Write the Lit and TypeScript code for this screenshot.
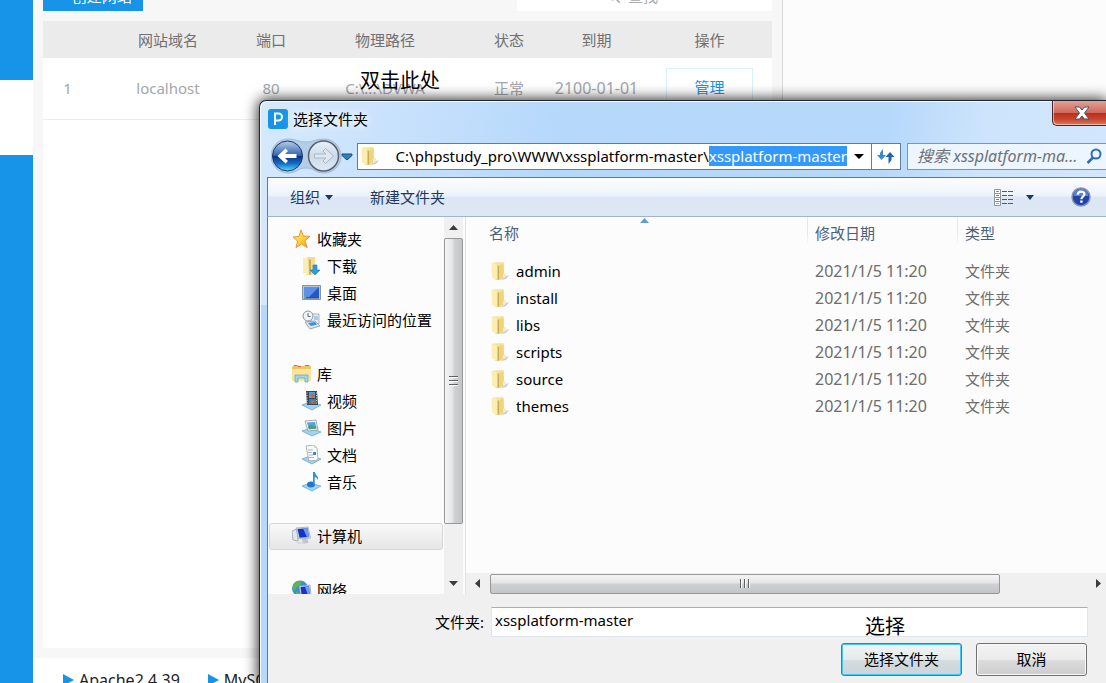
import { LitElement, html, css, svg } from "lit";
import { customElement, property, query } from "lit/decorators.js";
import { classMap } from "lit/directives/class-map.js";

const ICONS: Record<string, unknown> = {
  star: svg`<path d="M9 1l2.400 6 6.600.400-5 4.300 2.200 7L9.600 15l-5.600 3.600 1.600-6.600L1 8l6-.600z" fill="url(#g-star)" stroke="#e8963a" stroke-width="1"/>
    <defs><linearGradient id="g-star" x1="0" y1="0" x2="1" y2="1"><stop offset="0" stop-color="#fff0a0"/><stop offset=".5" stop-color="#ffd23c"/><stop offset="1" stop-color="#f29a1e"/></linearGradient></defs>`,
  download: svg`<path d="M5 1h8v16l-3 2H4z" fill="#f3dc8c"/><path d="M1 1.500l6 1.500v16l-6-2z" fill="#fbeeb4"/><path d="M6.500 3L9 4v14l-2 1z" fill="#cfae55"/>
    <path d="M11 9h4v5h3l-5 5-5-5h3z" fill="#2f9be4" stroke="#1c78b8" stroke-width=".6"/>`,
  desktop: svg`<path d="M.5 2.500h18v14H.5z" fill="#b9c6d2" stroke="#8394a6"/><path d="M2 4h15v10H2z" fill="#2458c9"/><path d="M2 4h15L7 14H2z" fill="#5c90ea"/><path d="M2 14h15v1.500H2z" fill="#39546f"/><path d="M2 13.500h2v2H2z" fill="#4fc36b"/>`,
  recent: svg`<path d="M9 4h8v10H9z" fill="#e9edf2" stroke="#98a3ae" stroke-width=".8"/><path d="M3 12l10-1 5 5-10 3z" fill="#dde5ec" stroke="#8c98a5" stroke-width=".8"/><path d="M6 13l7-1 2 2.500-6 1.500z" fill="#3d8fd8"/><circle cx="6" cy="6" r="5" fill="#f0f3f7" stroke="#8995a3"/><path d="M6 3v3.500H8.500" fill="none" stroke="#5a6b7d"/><path d="M12 7h4M12 9h4" stroke="#6aa7d8"/>`,
  library: svg`<path d="M0 3l3-2h3l1 1h5l1-1h5l1 2v14H0z" fill="#e9c765"/><path d="M0 5h19v12H0z" fill="#f8e59a"/><path d="M2 1h3v1H2z" fill="#4caf50"/><path d="M6 2h3v1H6z" fill="#e85b4a"/><path d="M13 1h4v1h-4z" fill="#4b9ddb"/><path d="M3 11h13v7h-3v-4H6v4H3z" fill="#9fd6f2" stroke="#5fa8d0" stroke-width=".8"/>`,
  video: svg`<path d="M0 14l8-3 11 3-9 5z" fill="#9fd3ef" stroke="#5fa3cb" stroke-width=".7"/><path d="M4 0h11l1 14H5z" fill="#3e4650"/><path d="M7 1h6v6H7z" fill="#4ca3e0"/><path d="M7 8h7v5H7z" fill="#2a7fc8"/><path d="M8 4l3-2 2 3-2 2zM9 10l3-1 1 3-3 1z" fill="#c9683a"/><path d="M5 1.500v12M14.500 1.500v12" stroke="#cfd6dc" stroke-dasharray="1 1.500"/>`,
  picture: svg`<path d="M0 13l8-3 11 4-9 4z" fill="#9fd3ef" stroke="#5fa3cb" stroke-width=".7"/><path d="M3 3l11-1 2 10-10 1z" fill="#f3f6f8" stroke="#8f9ba6" stroke-width=".8"/><path d="M5 4.500l8-.5 1.500 6.500-7.500.8z" fill="#4da5e2"/><path d="M6 9l3-2 2 1.500 3-.5.5 2.500-7.500.8z" fill="#5a9a6c"/>`,
  document: svg`<path d="M0 14l8-3 11 3-9 5z" fill="#9fd3ef" stroke="#5fa3cb" stroke-width=".7"/><path d="M4 1l8-1 3 3 1 12-9 1z" fill="#fafbfc" stroke="#9aa3ad" stroke-width=".8"/><path d="M12 0v3h3z" fill="#cdd4da"/><path d="M6 5h5M6 7.500h4M7 10h4M7 12.500h5" stroke="#a9b4c4"/><path d="M11 7h3v3h-3z" fill="#3a84cc"/>`,
  music: svg`<path d="M0 14l8-3 11 3-9 5z" fill="#9fd3ef" stroke="#5fa3cb" stroke-width=".7"/><ellipse cx="9" cy="12.500" rx="4" ry="3" fill="#1f78c8"/><path d="M11 0h2c0 3 4 4 3 8-1-2-2-3-3.300-3v8H11z" fill="#2f8fdc"/>`,
  computer: svg`<path d="M0 5l5-2 1 12-5-1z" fill="#e2e6ea" stroke="#9199a2" stroke-width=".7"/><path d="M4 2l12-1 2.500 11-12 1z" fill="#d5dbe2" stroke="#9aa5b1" stroke-width=".7"/><path d="M5.500 3l10-.7L17 11l-9.500.8z" fill="#1735c4"/><path d="M11 2.600l4.500-.3L17 11l-2 .2z" fill="#6c9df2"/><path d="M10 13l5-.5 2 4-6 1.500z" fill="#c0c6cd"/><path d="M3 15l8 1 1 2-6 0z" fill="#d9dde2"/>`,
  network: svg`<circle cx="8" cy="8.500" r="8" fill="#3f8fd0"/><path d="M2 4c4-4 6-3 8-2l-2 3-3 2-3 4c-2-2-1-5 0-7zM4 12l4 1 1 3c-3 0-5-2-5-4z" fill="#58b84c"/><path d="M7 6l11-1 1 10-10 2z" fill="#d7dee6" stroke="#8b97a4" stroke-width=".7"/><path d="M8.500 7l8.500-.7.7 7.700-8 1.500z" fill="#1735c4"/><path d="M13 6.700l4-.4.7 7.700-2 .4z" fill="#6c9df2"/>`,
  folder: svg`<path d="M13 16l6-2-3 4-5 1z" fill="#c9cbce"/><path d="M3 1.500L13.500 1l.5 15-4 3H5z" fill="#f6e39b"/><path d="M8.500 5l5-3 .5 14-5 3z" fill="#efd578"/><path d="M6.500 3.500L9 5v13.500L6.500 19z" fill="#c9ab5c"/><path d="M1.500 1.500l6 2v15.500L2 16.500z" fill="#fbeeb0"/><path d="M13 13l3-1.500v4.500l-3 1.500z" fill="#f3ead0"/>`,
};

const icon = (name: string) =>
  html`<svg class="icon" width="20" height="20" viewBox="0 0 20 20" aria-hidden="true">${ICONS[name]}</svg>`;

interface TreeItem {
  icon: string;
  label: string;
  child?: boolean;
  selected?: boolean;
}

const TREE: TreeItem[][] = [
  [
    { icon: "star", label: "收藏夹" },
    { icon: "download", label: "下载", child: true },
    { icon: "desktop", label: "桌面", child: true },
    { icon: "recent", label: "最近访问的位置", child: true },
  ],
  [
    { icon: "library", label: "库" },
    { icon: "video", label: "视频", child: true },
    { icon: "picture", label: "图片", child: true },
    { icon: "document", label: "文档", child: true },
    { icon: "music", label: "音乐", child: true },
  ],
  [{ icon: "computer", label: "计算机", selected: true }],
  [{ icon: "network", label: "网络" }],
];

const FOLDERS = ["admin", "install", "libs", "scripts", "source", "themes"];

const base = css`
  * {
    box-sizing: border-box;
  }
  button,
  input {
    font: inherit;
    color: inherit;
    margin: 0;
    padding: 0;
    border: 0;
    border-radius: 0;
    background: none;
    outline: none;
  }
  table {
    border-collapse: collapse;
    table-layout: fixed;
    width: 100%;
  }
  th,
  td {
    padding: 0;
    font-weight: 400;
  }
  svg {
    display: block;
    flex: none;
  }
`;

@customElement("folder-dialog")
export class FolderDialog extends LitElement {
  @property() path = "C:\\phpstudy_pro\\WWW\\xssplatform-master\\";
  @property() folder = "xssplatform-master";
  @query(".path") pathInput!: HTMLInputElement;

  static styles = [
    base,
    css`
      :host {
        display: flex;
        flex-direction: column;
        overflow: hidden;
        padding: 0 0 0 7px;
        border: 1px solid #20262e;
        border-width: 1px 0 0 1px;
        border-radius: 7px 0 0 0;
        color: #000;
        background:
          linear-gradient(100deg, #d6e9fd 0, #c6e0fc 160px, #b5d8fb 300px, #b5d8fb 620px, #cde4fc 720px, #d3e7fd 100%) 0 0 / 100% 204px no-repeat,
          #b5d8fb;
        box-shadow: 0 0 14px 1px rgba(0, 0, 0, 0.85), inset 1px 1px 0 #f2f9ff;
      }
      .title {
        display: flex;
        height: 36px;
        padding-left: 1px;
        gap: 5px;
        align-items: center;
      }
      .title h1 {
        flex: 1;
        margin: 0;
        font-size: 15px;
        font-weight: 400;
        line-height: 20px;
        text-shadow: 0 0 8px #fff, 0 0 12px #fff;
      }
      .close {
        align-self: flex-start;
        width: 54px;
        height: 25px;
        padding-left: 21px;
        border: 1px solid #4c2326;
        border-width: 0 0 1px 1px;
        border-radius: 0 0 0 5px;
        background: linear-gradient(#e3a097 0, #d06a5c 48%, #b8301d 50%, #c8432c 75%, #d87a58 100%);
        box-shadow: inset 1px -1px 0 rgba(255, 255, 255, 0.5);
      }
      .nav {
        display: flex;
        height: 40px;
        align-items: center;
        padding: 0 0 2px 4px;
      }
      .travel {
        display: flex;
        align-items: center;
        width: 86px;
      }
      .address {
        display: flex;
        flex: 1;
        min-width: 0;
        height: 27px;
        align-items: center;
        border: 1px solid #5d7f9f;
        background: #fff;
      }
      .address > svg {
        margin: 0 4px 0 2px;
      }
      .path {
        flex: 1;
        min-width: 0;
        height: 21px;
        text-align: right;
      }
      .path::selection {
        background: #3399ff;
        color: #fff;
      }
      .drop {
        width: 24px;
        height: 25px;
        display: grid;
        place-items: center;
      }
      .refresh {
        width: 29px;
        height: 25px;
        display: grid;
        place-items: center;
        border-left: 1px solid #5d7f9f;
      }
      .search {
        display: flex;
        width: 199px;
        height: 27px;
        margin-left: 6px;
        padding-left: 9px;
        align-items: center;
        border: 1px solid #7b95b3;
        border-right: 0;
        background: #edf5fe;
      }
      .search input {
        width: 169px;
        font-size: 16px;
        font-style: italic;
        text-overflow: ellipsis;
      }
      .search input::placeholder {
        color: #6d7178;
        opacity: 1;
      }
      .tools {
        display: flex;
        height: 40px;
        padding: 0 15px 0 22px;
        align-items: center;
        border: 1px solid #5f7a94;
        border-width: 1px 0 1px 1px;
        border-bottom-color: #a0b4cb;
        color: #1e395b;
        background: linear-gradient(#fbfdff 0, #eef4fb 45%, #dce6f4 52%, #dde8f5 100%);
      }
      .tools button {
        display: flex;
        align-items: center;
        gap: 5px;
        line-height: 20px;
      }
      .tools button + button {
        margin-left: 37px;
      }
      .tools .view {
        margin-left: auto;
        gap: 12px;
      }
      .body {
        display: flex;
        flex: 1;
        min-height: 0;
        border-left: 1px solid #5f7a94;
        background: #fcfcfc;
      }
      .tree {
        width: 176px;
        padding: 9px 1px 0;
        overflow: hidden;
      }
      .tree ul {
        margin: 0 0 27px;
        padding: 0;
        list-style: none;
      }
      .tree li {
        display: flex;
        height: 27px;
        padding: 0 0 2px 22px;
        gap: 5px;
        align-items: center;
        line-height: 20px;
        border: 1px solid transparent;
        border-radius: 3px;
      }
      .tree li.child {
        padding-left: 32px;
      }
      .tree li.selected {
        border-color: #d6d6d6;
        background: linear-gradient(#f9f9f9, #e6e6e6);
      }
      .vbar {
        display: flex;
        flex-direction: column;
        width: 19px;
        align-items: center;
        background: #f0f0f0;
      }
      .arrow {
        display: grid;
        width: 19px;
        height: 21px;
        flex: none;
        place-items: center;
      }
      .vthumb {
        display: grid;
        width: 19px;
        flex: 286;
        place-items: center;
        border: 1px solid #979797;
        border-radius: 2px;
        background: linear-gradient(90deg, #f5f5f5, #e4e4e6 45%, #cfd0d2 55%, #c4c5c8);
      }
      .vrest {
        flex: 49;
      }
      .list {
        display: flex;
        flex: 1;
        min-width: 0;
        flex-direction: column;
        margin-left: 2px;
        border-left: 1px solid #d6e5f5;
      }
      .files {
        position: relative;
        flex: 1;
      }
      .sort {
        position: absolute;
        top: 1px;
        left: 174px;
      }
      .files th {
        height: 40px;
        padding: 0 0 9px 8px;
        text-align: left;
        line-height: 20px;
        color: #4c607a;
        background: linear-gradient(#dfeaf6, #dfeaf6 50%, #fcfcfc) 0 0 / 1px 30px no-repeat;
      }
      .files th:first-child {
        padding-left: 23px;
        background: none;
      }
      .files td {
        height: 27px;
        padding-left: 8px;
        line-height: 20px;
        color: #6d6d6d;
      }
      .files td:first-child {
        padding-left: 24px;
        color: #000;
      }
      .files .date {
        font-size: 16px;
      }
      .name {
        display: flex;
        gap: 6px;
        align-items: center;
      }
      .c-name {
        width: 341px;
      }
      .c-date {
        width: 150px;
      }
      .hbar {
        display: flex;
        height: 21px;
        padding-left: 2px;
        align-items: center;
        background: #f0f0f0;
      }
      .hthumb {
        display: grid;
        flex: 510;
        height: 20px;
        place-items: center;
        border: 1px solid #979797;
        border-radius: 2px;
        background: linear-gradient(#f5f5f5, #e4e4e6 45%, #cfd0d2 50%, #c4c5c8);
      }
      .hrest {
        flex: 90;
      }
      .hbar .arrow {
        width: 22px;
        padding-right: 4px;
      }
      .hbar .arrow:last-child {
        width: 16px;
        padding-right: 0;
      }
      .foot {
        padding: 13px 18px 7px 0;
        border-left: 1px solid #5f7a94;
        background: #f0f0f0;
      }
      .field {
        display: flex;
        align-items: center;
      }
      .field label {
        width: 223px;
        padding-right: 7px;
        text-align: right;
        line-height: 20px;
      }
      .field input {
        flex: 1;
        min-width: 0;
        height: 30px;
        padding: 0 3px 5px;
        border: 1px solid #e0e5ee;
        border-top-color: #abadb3;
        background: #fff;
      }
      .actions {
        display: flex;
        justify-content: flex-end;
        gap: 14px;
        padding: 6px 1px 0 0;
      }
      .actions button {
        width: 111px;
        height: 33px;
        padding-bottom: 2px;
        border: 1px solid #707070;
        border-radius: 3px;
        background: linear-gradient(#f3f3f3, #ebebeb 50%, #dcdcdc 51%, #cdcdcd);
        box-shadow: inset 0 0 0 1px #fafafa;
      }
      .actions .primary {
        width: 121px;
        border-color: #3c7fb1;
        background: linear-gradient(#f1f4f5, #e4eaec 50%, #d4dde0 51%, #cad5d9);
        box-shadow: inset 0 0 0 1px #3fc9f4;
      }
    `,
  ];

  firstUpdated() {
    const input = this.pathInput;
    input.focus({ preventScroll: true });
    input.setSelectionRange(this.path.length, input.value.length);
    input.scrollLeft = input.scrollWidth;
  }

  render() {
    const down = html`<svg width="10" height="5" viewBox="0 0 10 5"><path d="M0 0h10L5 5z" fill="currentColor" /></svg>`;
    return html`
      <header class="title">
        <svg width="20" height="20" viewBox="0 0 20 20" aria-hidden="true">
          <rect width="20" height="20" rx="3" fill="#1794e8" />
          <path d="M7 16V4.500h3.500a3.500 3.500 0 0 1 0 7H7" fill="none" stroke="#fff" stroke-width="2" />
        </svg>
        <h1>选择文件夹</h1>
        <button class="close" aria-label="关闭">
          <svg width="16" height="14" viewBox="0 0 16 14">
            <path d="M1 1h4.500L8 4l2.500-3H15l-4.500 6 4.500 6h-4.500L8 10l-2.500 3H1l4.500-6z" fill="#fff" stroke="#4f5364" stroke-width="1" />
          </svg>
        </button>
      </header>
      <div class="nav">
        <div class="travel">
          <svg width="84" height="36" viewBox="0 0 84 36" aria-hidden="true">
            <defs>
              <linearGradient id="blue" x1="0" y1="0" x2="0" y2="1">
                <stop offset="0" stop-color="#b5cdea" />
                <stop offset=".48" stop-color="#3664ae" />
                <stop offset=".5" stop-color="#0b2f86" />
                <stop offset=".75" stop-color="#136cc4" />
                <stop offset="1" stop-color="#4fe0fb" />
              </linearGradient>
              <linearGradient id="pale" x1="0" y1="0" x2="0" y2="1">
                <stop offset="0" stop-color="#e9f1f9" />
                <stop offset=".5" stop-color="#ccdae9" />
                <stop offset="1" stop-color="#dfeaf6" />
              </linearGradient>
            </defs>
            <path d="M17 1c9 0 10 3 18 3s9-3 18-3a17 17 0 0 1 0 34c-9 0-10-5-18-5s-9 5-18 5a17 17 0 0 1 0-34z" fill="#a9c2df" stroke="#8fa9c6" opacity=".7" />
            <circle cx="16.500" cy="18" r="15" fill="url(#blue)" stroke="#1a3568" />
            <path d="M6.500 18l8-7.500 2.500 2.500-3 3h11.500v4H14l3 3-2.500 2.500z" fill="#fff" />
            <circle cx="52.500" cy="18" r="15" fill="url(#pale)" stroke="#59626d" stroke-width="1.500" />
            <path d="M62.500 18l-8-7.500-2.500 2.500 3 3H43.500v4H55l-3 3 2.500 2.500z" fill="#dfe7ef" stroke="#aab6c3" />
            <path d="M71 16h10v1.500L76 22l-5-4.500z" fill="#2f83bd" stroke="#1c4873" />
          </svg>
        </div>
        <div class="address">
          ${icon("folder")}
          <input class="path" aria-label="地址" spellcheck="false" .value=${this.path + this.folder} />
          <button class="drop" aria-label="以前的位置">${down}</button>
          <button class="refresh" aria-label="刷新">
            <svg width="18" height="17" viewBox="0 0 18 17">
              <path d="M6 1L3 5v2H0l4.500 5L9 7H6V5z" fill="#3a8ace" />
              <path d="M13 4l4.500 5h-3v3l-3 4v-7H8.500z" fill="#2563ab" />
            </svg>
          </button>
        </div>
        <label class="search">
          <input type="text" aria-label="搜索" placeholder="搜索 xssplatform-ma..." />
          <svg width="16" height="16" viewBox="0 0 16 16">
            <circle cx="10" cy="6" r="4.500" fill="none" stroke="#2f6db3" stroke-width="2" />
            <path d="M7 9.500L1.500 15" stroke="#2f6db3" stroke-width="2.500" />
          </svg>
        </label>
      </div>
      <div class="tools">
        <button>组织 <svg width="8" height="5" viewBox="0 0 8 5"><path d="M0 0h8L4 5z" fill="currentColor" /></svg></button>
        <button>新建文件夹</button>
        <button class="view" aria-label="更改视图">
          <svg width="20" height="17" viewBox="0 0 20 17">
            <path d="M.5.500h6v16h-6z" fill="#fff" stroke="#8d959e" />
            <path d="M1 4.500h5M1 8.500h5M1 12.500h5" stroke="#8d959e" />
            <path d="M2 2.500h3" stroke="#69a05c" /><path d="M2 6.500h3" stroke="#e04a3d" /><path d="M2 10.500h3" stroke="#4a86d0" /><path d="M2 14.500h3" stroke="#a0c050" />
            <path d="M8 2.500h11M8 6.500h11M8 10.500h11M8 14.500h11" stroke="#4c5d70" stroke-dasharray="5 1" />
          </svg>
          <svg width="8" height="5" viewBox="0 0 8 5"><path d="M0 0h8L4 5z" fill="currentColor" /></svg>
        </button>
        <button aria-label="帮助">
          <svg width="20" height="20" viewBox="0 0 20 20">
            <circle cx="10" cy="10" r="9" fill="#1f45ad" stroke="#8b96ab" stroke-width="1.500" />
            <path d="M2.500 9a7.500 7.500 0 0 1 15 0z" fill="#5b82d8" />
            <path d="M6.800 7.800c0-4.300 6.600-4.100 6.600-.6 0 2.300-3 2.300-3 5" fill="none" stroke="#fff" stroke-width="2.200" />
            <path d="M9.200 13.500h2.400v2.300H9.200z" fill="#fff" />
          </svg>
        </button>
      </div>
      <div class="body">
        <nav class="tree">
          ${TREE.map(
            (group) => html`<ul>
              ${group.map(
                (item) => html`<li class=${classMap({ child: !!item.child, selected: !!item.selected })}>
                  ${icon(item.icon)}<span>${item.label}</span>
                </li>`
              )}
            </ul>`
          )}
        </nav>
        <div class="vbar">
          <div class="arrow"><svg width="9" height="5" viewBox="0 0 9 5"><path d="M0 5h9L4.500 0z" fill="#3c3c3c" /></svg></div>
          <div class="vthumb"><svg width="9" height="10" viewBox="0 0 9 10"><path d="M0 .5h9M0 4.500h9M0 8.500h9" stroke="#5c5f63" /><path d="M0 1.500h9M0 5.500h9M0 9.500h9" stroke="#fff" /></svg></div>
          <div class="vrest"></div>
          <div class="arrow"><svg width="9" height="5" viewBox="0 0 9 5"><path d="M0 0h9L4.500 5z" fill="#3c3c3c" /></svg></div>
        </div>
        <div class="list">
          <div class="files">
            <svg class="sort" width="9" height="5" viewBox="0 0 9 5"><path d="M0 5h9L4.500 0z" fill="#5ba3cc" /></svg>
            <table>
              <colgroup><col class="c-name" /><col class="c-date" /><col /></colgroup>
              <thead>
                <tr><th>名称</th><th>修改日期</th><th>类型</th></tr>
              </thead>
              <tbody>
                ${FOLDERS.map(
                  (name) => html`<tr>
                    <td><div class="name">${icon("folder")}<span>${name}</span></div></td>
                    <td class="date">2021/1/5 11:20</td>
                    <td>文件夹</td>
                  </tr>`
                )}
              </tbody>
            </table>
          </div>
          <div class="hbar">
            <div class="arrow"><svg width="5" height="9" viewBox="0 0 5 9"><path d="M5 0v9L0 4.500z" fill="#3c3c3c" /></svg></div>
            <div class="hthumb"><svg width="10" height="9" viewBox="0 0 10 9"><path d="M.5 0v9M4.500 0v9M8.500 0v9" stroke="#5c5f63" /><path d="M1.500 0v9M5.500 0v9M9.500 0v9" stroke="#fff" /></svg></div>
            <div class="hrest"></div>
            <div class="arrow"><svg width="5" height="9" viewBox="0 0 5 9"><path d="M0 0v9l5-4.500z" fill="#3c3c3c" /></svg></div>
          </div>
        </div>
      </div>
      <footer class="foot">
        <div class="field">
          <label for="folder">文件夹:</label>
          <input id="folder" spellcheck="false" .value=${this.folder} />
        </div>
        <div class="actions">
          <button class="primary">选择文件夹</button>
          <button>取消</button>
        </div>
      </footer>
    `;
  }
}

@customElement("app-root")
export class AppRoot extends LitElement {
  static styles = [
    base,
    css`
      :host {
        position: relative;
        display: grid;
        grid-template-columns: 33px minmax(0, 750px) 1fr;
        height: 100vh;
        overflow: hidden;
        font: 15px/20px "Noto Sans", "Noto Sans CJK SC", sans-serif;
        background: #fcfcfc;
      }
      .side {
        display: flex;
        flex-direction: column;
        background: #1794e8;
      }
      .side .active {
        height: 75px;
        margin-top: 80px;
        background: #fff;
      }
      .site {
        display: flex;
        flex-direction: column;
        min-height: 0;
        border-right: 1px solid #d8d8d8;
        background: #f7f7f7;
      }
      .bar {
        display: flex;
        height: 11px;
        margin: 0 10px 10px;
        align-items: flex-end;
        justify-content: space-between;
        overflow: hidden;
      }
      .create {
        display: flex;
        width: 100px;
        height: 30px;
        flex: none;
        gap: 9px;
        align-items: center;
        justify-content: center;
        color: #fff;
        background: #1794e8;
      }
      .find {
        display: flex;
        width: 255px;
        height: 30px;
        flex: none;
        padding-left: 90px;
        gap: 8px;
        align-items: center;
        background: #fff;
      }
      .find input {
        width: 100px;
      }
      .find input::placeholder {
        color: #a9a9a9;
        opacity: 1;
      }
      .sheet {
        flex: 1;
        margin: 0 10px 10px;
        background: #fff;
      }
      .sheet th {
        height: 37px;
        color: #707070;
        background: #ebebeb;
      }
      .sheet td {
        height: 61px;
        text-align: center;
        color: #a3a6ac;
        border-bottom: 1px solid #ededed;
      }
      .sheet .date {
        font-size: 16px;
      }
      .manage {
        display: block;
        width: 87px;
        height: 40px;
        margin: 0 auto;
        padding-bottom: 2px;
        color: #1794e8;
        border: 1px solid #d9f0fd;
      }
      .status {
        display: flex;
        height: 25px;
        padding: 12px 0 0 30px;
        gap: 28px;
        overflow: hidden;
        font-size: 16px;
        color: #222;
        background: #fff;
      }
      .status span {
        display: flex;
        gap: 5px;
        height: 20px;
        flex: none;
        align-items: center;
      }
      folder-dialog {
        position: absolute;
        inset: 100px 0 0 259px;
      }
      .note {
        position: absolute;
        font-size: 20px;
        line-height: 28px;
        color: #000;
      }
      .note-open {
        left: 360px;
        top: 67px;
      }
      .note-pick {
        left: 865px;
        bottom: 42px;
      }
    `,
  ];

  render() {
    const play = html`<svg width="11" height="12" viewBox="0 0 11 12"><path d="M0 0l11 6L0 12z" fill="#1794e8" /></svg>`;
    return html`
      <div class="side"><div class="active"></div></div>
      <main class="site">
        <div class="bar">
          <button class="create"><span>+</span><span>创建网站</span></button>
          <label class="find">
            <svg width="13" height="13" viewBox="0 0 13 13"><circle cx="5.500" cy="5.500" r="4.500" fill="none" stroke="#a9a9a9" /><path d="M9 9l4 4" stroke="#a9a9a9" stroke-width="1.500" /></svg>
            <input type="text" aria-label="查找" placeholder="查找" />
          </label>
        </div>
        <div class="sheet">
          <table>
            <colgroup>
              ${[49, 152, 54, 174, 74, 101, 125].map((w) => html`<col style="width:${w}px" />`)}
            </colgroup>
            <thead>
              <tr><th></th><th>网站域名</th><th>端口</th><th>物理路径</th><th>状态</th><th>到期</th><th>操作</th></tr>
            </thead>
            <tbody>
              <tr>
                <td>1</td><td>localhost</td><td>80</td><td>C:\\...\\DVWA</td><td>正常</td><td class="date">2100-01-01</td>
                <td><button class="manage">管理</button></td>
              </tr>
            </tbody>
          </table>
        </div>
        <div class="status"><span>${play}Apache2.4.39</span><span>${play}MySQL5.7.26</span></div>
      </main>
      <folder-dialog></folder-dialog>
      <div class="note note-open">双击此处</div>
      <div class="note note-pick">选择</div>
    `;
  }
}
